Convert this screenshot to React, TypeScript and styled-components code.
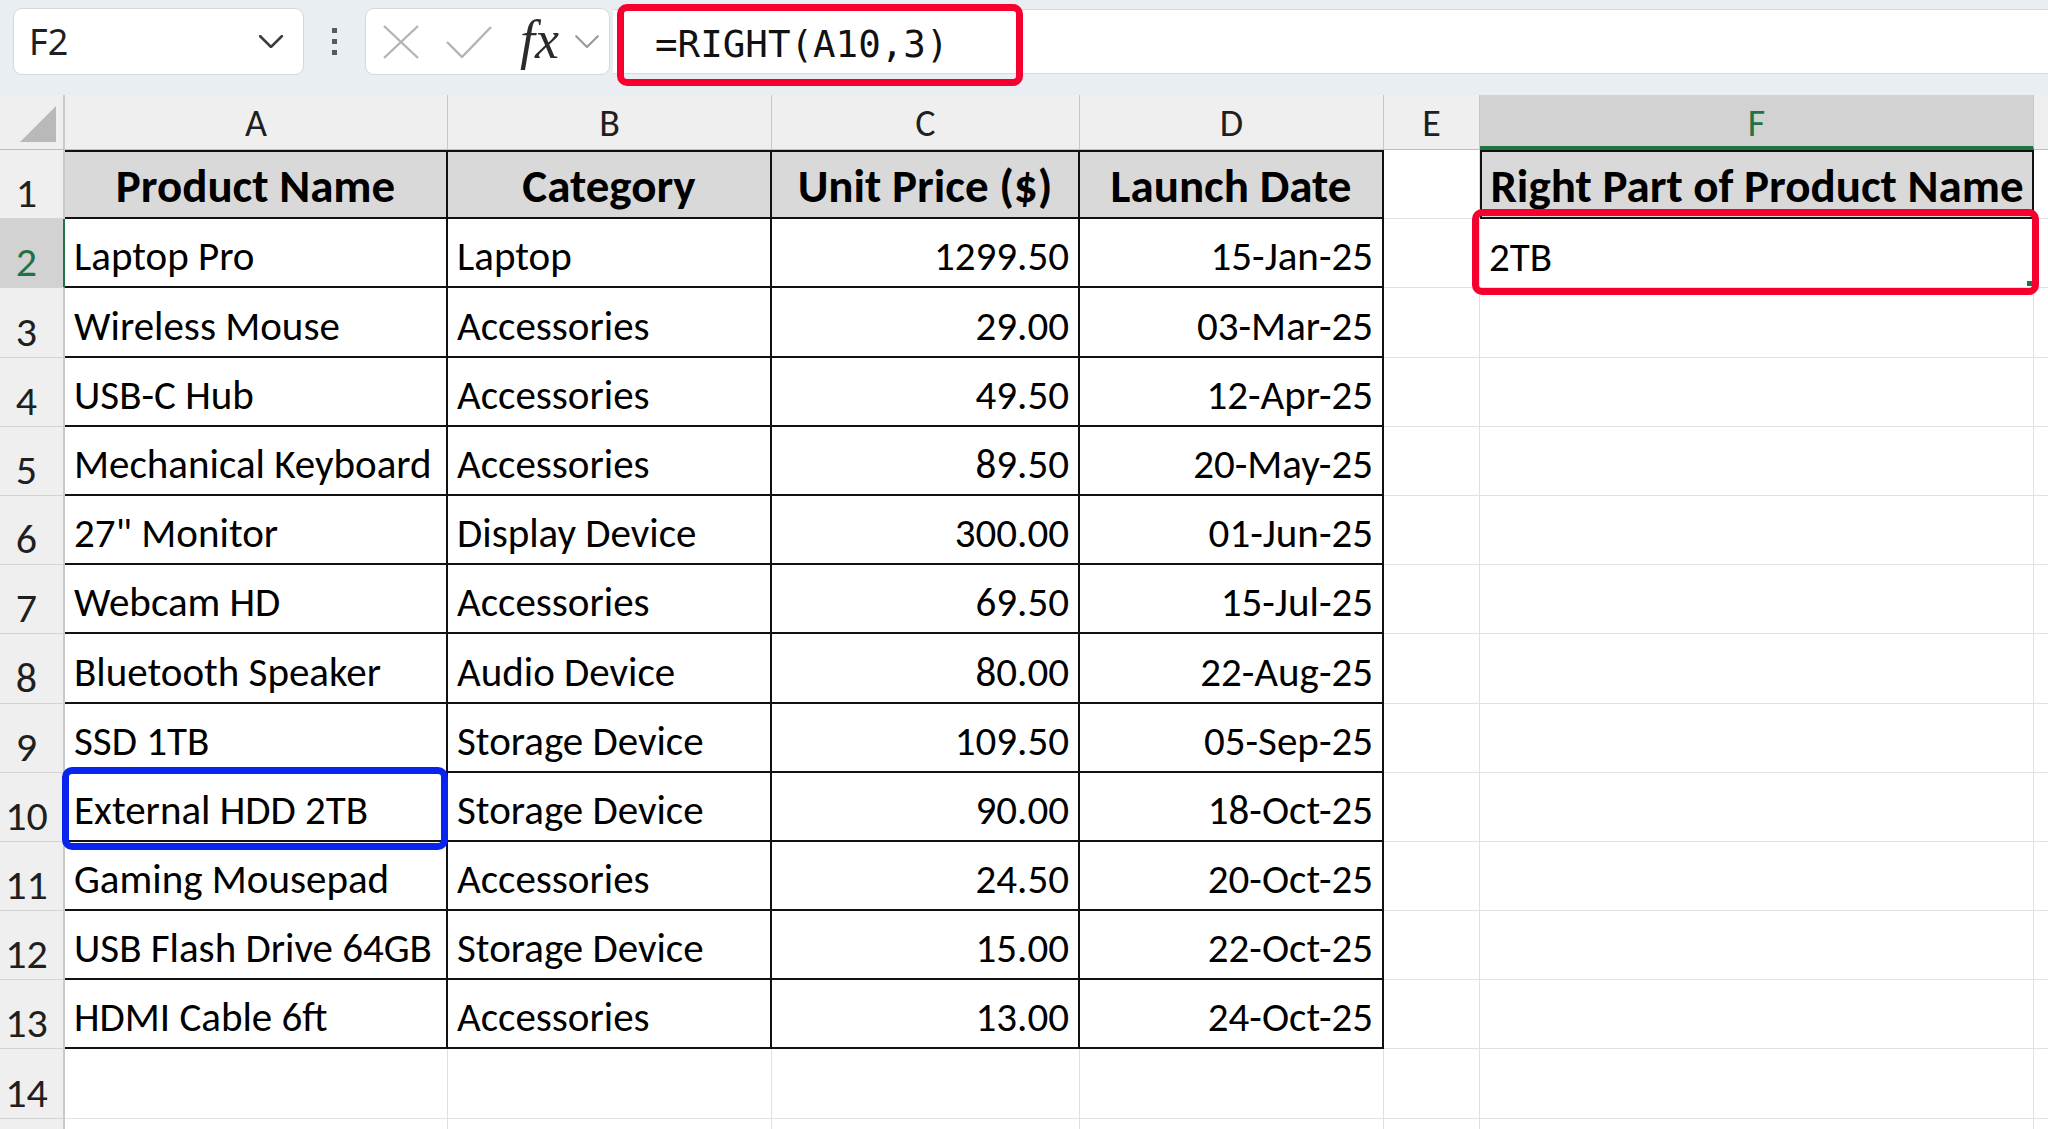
import React from 'react';
import styled, { createGlobalStyle, css } from 'styled-components';

const CELL_FONT = `Carlito, "Liberation Sans Narrow", "Open Sans", sans-serif`;
const GREEN = '#217346';

const GlobalStyle = createGlobalStyle`
  html, body {
    margin: 0;
    padding: 0;
    background: #ffffff;
    overflow: hidden;
  }
  body {
    font-family: ${CELL_FONT};
  }
`;

const Page = styled.div`
  width: 2048px;
  height: 1129px;
  overflow: hidden;
  display: flex;
  flex-direction: column;
  background: #ffffff;
`;

/* ---------- formula bar ---------- */

const FormulaBar = styled.div`
  flex: none;
  height: 95px;
  box-sizing: border-box;
  padding: 8px 0 0 13px;
  background: #e8eef1;
  display: flex;
  align-items: flex-start;
`;

const NameBox = styled.div`
  width: 291px;
  height: 67px;
  box-sizing: border-box;
  background: #ffffff;
  border: 1px solid #d5d8da;
  border-radius: 9px;
  display: flex;
  align-items: center;
  justify-content: space-between;
  padding: 0 20px 0 15px;
  font-family: "Noto Sans", "Open Sans", sans-serif;
  font-size: 36px;
  color: #1f1f1f;
`;

const Grip = styled.div`
  width: 61px;
  height: 67px;
  display: flex;
  flex-direction: column;
  align-items: center;
  justify-content: center;
  gap: 6px;
`;

const GripDot = styled.span`
  width: 5px;
  height: 5px;
  background: #5a5a5a;
`;

const FxBox = styled.div`
  width: 245px;
  height: 67px;
  box-sizing: border-box;
  background: #ffffff;
  border: 1px solid #d5d8da;
  border-radius: 9px;
  display: flex;
  align-items: center;
  padding-left: 16px;
  gap: 26px;
`;

const FxLabel = styled.span`
  font-family: "Liberation Serif", serif;
  font-style: italic;
  font-size: 54px;
  color: #2b2b2b;
  margin-left: 2px;
  margin-right: -10px;
  line-height: 1;
  padding-bottom: 4px;
`;

const FormulaInput = styled.div`
  position: relative;
  flex: 1;
  height: 65px;
  margin: 1px 0 0 3px;
  box-sizing: border-box;
  background: #ffffff;
  border-top: 1px solid #d6dadc;
  border-bottom: 1px solid #d6dadc;
  display: flex;
  align-items: center;
  padding: 4px 0 0 42px;
  font-family: "DejaVu Sans Mono", "Liberation Mono", monospace;
  font-size: 37.5px;
  color: #111111;
`;

const Highlight = styled.div<{ $color: string }>`
  position: absolute;
  box-sizing: border-box;
  border: 7px solid ${({ $color }) => $color};
  border-radius: 10px;
  pointer-events: none;
  z-index: 2;
`;

const FormulaHighlight = styled(Highlight)`
  left: 4px;
  top: -6px;
  width: 406px;
  height: 82px;
`;

/* ---------- sheet grid ---------- */

const Sheet = styled.div`
  display: grid;
  grid-template-columns: 65px 383px 324px 308px 304px 96px 554px 1fr;
  grid-template-rows: 55px;
  grid-auto-rows: 69.2px;
`;

const Corner = styled.div`
  background: #efefef;
  border-right: 2px solid #c9c9c9;
  border-bottom: 1px solid #bdbdbd;
  box-sizing: border-box;
  display: flex;
  align-items: flex-end;
  justify-content: flex-end;
  padding: 0 7px 7px 0;
`;

const ColHeader = styled.div<{ $active?: boolean }>`
  box-sizing: border-box;
  background: ${({ $active }) => ($active ? '#d2d2d2' : '#efefef')};
  color: ${({ $active }) => ($active ? GREEN : '#1f1f1f')};
  border-right: 1px solid #c8c8c8;
  border-bottom: ${({ $active }) => ($active ? `4px solid ${GREEN}` : '1px solid #bdbdbd')};
  display: flex;
  align-items: flex-end;
  justify-content: center;
  padding-bottom: ${({ $active }) => ($active ? '4px' : '7px')};
  font-size: 38px;
  line-height: 38px;
`;

const RowHeader = styled.div<{ $active?: boolean }>`
  box-sizing: border-box;
  background: ${({ $active }) => ($active ? '#d2d2d2' : '#efefef')};
  color: ${({ $active }) => ($active ? GREEN : '#1f1f1f')};
  border-right: 2px solid ${({ $active }) => ($active ? GREEN : '#c9c9c9')};
  border-bottom: 1px solid #d3d3d3;
  display: flex;
  align-items: flex-end;
  justify-content: center;
  padding: 0 10px 4px 0;
  font-size: 42px;
  line-height: 42px;
`;

type Align = 'left' | 'center' | 'right';

const Cell = styled.div<{
  $align?: Align;
  $head?: boolean;
  $boxed?: boolean;
  $top?: boolean;
  $leftEdge?: boolean;
}>`
  position: relative;
  box-sizing: border-box;
  background: ${({ $head }) => ($head ? '#d9d9d9' : '#ffffff')};
  border-right: 1px solid #e1e1e1;
  border-bottom: 1px solid #e1e1e1;
  display: flex;
  align-items: flex-end;
  justify-content: ${({ $align }) =>
    $align === 'right' ? 'flex-end' : $align === 'center' ? 'center' : 'flex-start'};
  padding: ${({ $head }) => ($head ? '0 8px 7px 8px' : '0 9px 9px 9px')};
  font-size: ${({ $head }) => ($head ? '47px' : '41px')};
  line-height: ${({ $head }) => ($head ? '47px' : '41px')};
  font-weight: ${({ $head }) => ($head ? 700 : 400)};
  color: #000000;
  white-space: nowrap;
  ${({ $boxed }) =>
    $boxed &&
    css`
      border-right: 2px solid #111111;
      border-bottom: 2px solid #111111;
    `}
  ${({ $top }) =>
    $top &&
    css`
      border-top: 2px solid #111111;
    `}
  ${({ $leftEdge }) =>
    $leftEdge &&
    css`
      border-left: 2px solid #111111;
    `}
`;

const CellHighlight = styled(Highlight)<{ $inset: [number, number, number, number] }>`
  top: ${({ $inset }) => $inset[0]}px;
  right: ${({ $inset }) => $inset[1]}px;
  bottom: ${({ $inset }) => $inset[2]}px;
  left: ${({ $inset }) => $inset[3]}px;
`;

const FillHandle = styled.span`
  position: absolute;
  right: 1px;
  bottom: 1px;
  width: 5px;
  height: 5px;
  background: ${GREEN};
  z-index: 3;
`;

const Chevron = ({ size, color, width }: { size: number; color: string; width: number }) => (
  <svg width={size} height={size * 0.55} viewBox="0 0 20 11" fill="none">
    <path d="M1 1 L10 10 L19 1" stroke={color} strokeWidth={width} strokeLinecap="round" />
  </svg>
);

const CancelIcon = () => (
  <svg width="38" height="34" viewBox="0 0 38 34" fill="none">
    <path d="M2 1 L36 33 M36 1 L2 33" stroke="#b4b4b4" strokeWidth="2.4" />
  </svg>
);

const EnterIcon = () => (
  <svg width="46" height="32" viewBox="0 0 46 32" fill="none">
    <path d="M1 16 L16 31 L45 1" stroke="#b4b4b4" strokeWidth="2.4" />
  </svg>
);

const SelectAllTriangle = () => (
  <svg width="36" height="36" viewBox="0 0 36 36">
    <polygon points="36,0 36,36 0,36" fill="#b9b9b9" />
  </svg>
);

const rows: [string, string, string, string][] = [
  ['Laptop Pro', 'Laptop', '1299.50', '15-Jan-25'],
  ['Wireless Mouse', 'Accessories', '29.00', '03-Mar-25'],
  ['USB-C Hub', 'Accessories', '49.50', '12-Apr-25'],
  ['Mechanical Keyboard', 'Accessories', '89.50', '20-May-25'],
  ['27" Monitor', 'Display Device', '300.00', '01-Jun-25'],
  ['Webcam HD', 'Accessories', '69.50', '15-Jul-25'],
  ['Bluetooth Speaker', 'Audio Device', '80.00', '22-Aug-25'],
  ['SSD 1TB', 'Storage Device', '109.50', '05-Sep-25'],
  ['External HDD 2TB', 'Storage Device', '90.00', '18-Oct-25'],
  ['Gaming Mousepad', 'Accessories', '24.50', '20-Oct-25'],
  ['USB Flash Drive 64GB', 'Storage Device', '15.00', '22-Oct-25'],
  ['HDMI Cable 6ft', 'Accessories', '13.00', '24-Oct-25'],
];

const columns = ['A', 'B', 'C', 'D', 'E', 'F', ''];

export default function App() {
  return (
    <Page>
      <GlobalStyle />
      <FormulaBar>
        <NameBox>
          <span>F2</span>
          <Chevron size={24} color="#3c3c3c" width={2.2} />
        </NameBox>
        <Grip>
          <GripDot />
          <GripDot />
          <GripDot />
        </Grip>
        <FxBox>
          <CancelIcon />
          <EnterIcon />
          <FxLabel>fx</FxLabel>
          <Chevron size={24} color="#9a9a9a" width={1.8} />
        </FxBox>
        <FormulaInput>
          <FormulaHighlight $color="#f5002f" />
          =RIGHT(A10,3)
        </FormulaInput>
      </FormulaBar>

      <Sheet>
        <Corner>
          <SelectAllTriangle />
        </Corner>
        {columns.map((c, i) => (
          <ColHeader key={i} $active={c === 'F'}>
            {c}
          </ColHeader>
        ))}

        {/* row 1: table heading */}
        <RowHeader>1</RowHeader>
        <Cell $head $boxed $top $align="center">Product Name</Cell>
        <Cell $head $boxed $top $align="center">Category</Cell>
        <Cell $head $boxed $top $align="center">Unit Price ($)</Cell>
        <Cell $head $boxed $top $align="center">Launch Date</Cell>
        <Cell />
        <Cell $head $boxed $top $leftEdge $align="center">Right Part of Product Name</Cell>
        <Cell />

        {rows.map((r, i) => {
          const n = i + 2;
          return (
            <React.Fragment key={n}>
              <RowHeader $active={n === 2}>{n}</RowHeader>
              <Cell $boxed>
                {r[0]}
                {n === 10 && <CellHighlight $color="#0a24f0" $inset={[-6, -2, -10, -3]} />}
              </Cell>
              <Cell $boxed>{r[1]}</Cell>
              <Cell $boxed $align="right">{r[2]}</Cell>
              <Cell $boxed $align="right">{r[3]}</Cell>
              <Cell />
              <Cell>
                {n === 2 && (
                  <>
                    2TB
                    <CellHighlight $color="#f5002f" $inset={[-10, -6, -8, -8]} />
                    <FillHandle />
                  </>
                )}
              </Cell>
              <Cell />
            </React.Fragment>
          );
        })}

        <RowHeader>14</RowHeader>
        {columns.map((_, i) => (
          <Cell key={`r14-${i}`} />
        ))}
        {/* row 15 only peeks in at the bottom edge */}
        <RowHeader />
        {columns.map((_, i) => (
          <Cell key={`r15-${i}`} />
        ))}
      </Sheet>
    </Page>
  );
}
